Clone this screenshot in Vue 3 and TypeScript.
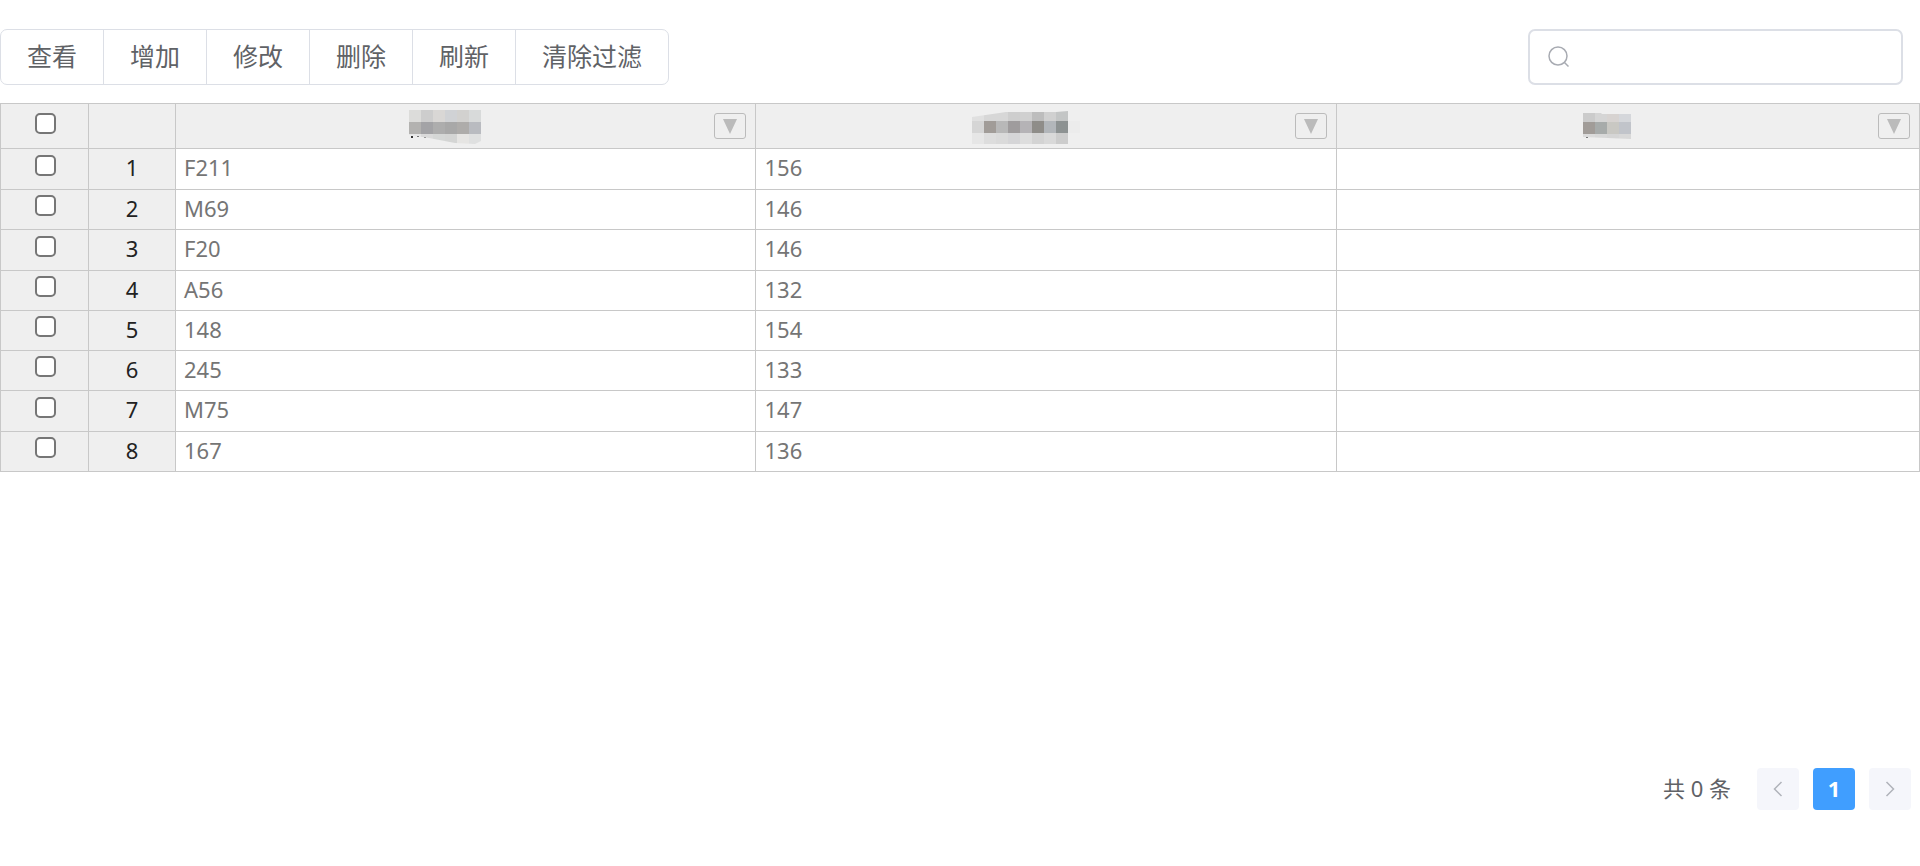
<script setup lang="ts">
import { ref, computed } from 'vue'

interface Block { x: number; y: number; w: number; h: number; fill: string }
interface Column { key: 'code' | 'size' | 'note'; width: number; height: number; outline: string; blocks: Block[] }
interface Row { id: number; code: string; size: string; note: string }

const actions = ['查看', '增加', '修改', '删除', '刷新', '清除过滤']

function strip(y: number, h: number, colors: string[]): Block[] {
  return colors.map((fill, i) => ({ x: i * 12, y, w: 12, h, fill }))
}

const columns: Column[] = [
  {
    key: 'code', width: 72, height: 34, outline: '0,0 72,0 72,31 66,34 46,33 20,28 0,25',
    blocks: [
      ...strip(0, 12, ['#dcdcda', '#cdcdcd', '#d9d7d5', '#d0d2d5', '#d2d1cf', '#d8dada']),
      ...strip(12, 12, ['#b3b2b0', '#a3a3a6', '#adadad', '#a8a8a8', '#aeacaa', '#b9bbc0']),
      ...strip(24, 10, ['#e5e5e5', '#dadada', '#d5d7d6', '#d4d5d4', '#e6e5e3', '#dfe0e0']),
    ],
  },
  {
    key: 'size', width: 108, height: 33, outline: '0,6 34,1 84,1 96,0 96,10 108,10 108,22 96,22 96,33 0,33',
    blocks: [
      ...strip(0, 10, ['#e0e0e0', '#d7d7d7', '#d7d7d7', '#cecece', '#d0d0d0', '#bdbdbd', '#d0d0d0', '#c3c5c5']),
      ...strip(10, 12, ['#d5d5d5', '#a19c98', '#b8b8b8', '#9f9c9d', '#b5b3b6', '#8f8d89', '#b2b6ba', '#8d9292', '#ececec']),
      ...strip(22, 11, ['#e6e6e6', '#dddddd', '#dadada', '#d5d5d7', '#dddddd', '#d3d3d3', '#d9d9d9', '#cccccc']),
    ],
  },
  {
    key: 'note', width: 48, height: 28, outline: '0,0 18,0 19,1 48,1 48,26 0,24',
    blocks: [
      ...strip(0, 9, ['#cbcbcb', '#d5d5d5', '#d7d3d1', '#d5d7db']),
      ...strip(9, 12, ['#a19c98', '#a7abaa', '#c9c8c3', '#c1c4ca']),
      ...strip(21, 5, ['#dbdbdb', '#d8d8d8', '#d5d5d5', '#d8d8d8']),
    ],
  },
]

const rows: Row[] = [
  ['F211', '156'], ['M69', '146'], ['F20', '146'], ['A56', '132'],
  ['148', '154'], ['245', '133'], ['M75', '147'], ['167', '136'],
].map(([code, size], i) => ({ id: i + 1, code, size, note: '' }))

const keyword = ref('')
const total = ref(0)
const selected = ref<number[]>([])
const allSelected = computed<boolean>({
  get: () => selected.value.length === rows.length,
  set: (on) => { selected.value = on ? rows.map((r) => r.id) : [] },
})
</script>

<template>
  <main class="page">
    <header class="toolbar">
      <div class="actions">
        <button v-for="a in actions" :key="a" type="button" class="action">{{ a }}</button>
      </div>
      <label class="search">
        <svg class="search-icon" viewBox="0 0 21 21" aria-hidden="true">
          <circle cx="10" cy="10" r="9" />
          <path d="M16.5 16.5 20.5 20.5" />
        </svg>
        <input v-model="keyword" type="text" class="search-input" aria-label="搜索" />
      </label>
    </header>

    <section class="grid">
      <table class="sheet">
        <colgroup>
          <col class="col-check" />
          <col class="col-index" />
          <col v-for="c in columns" :key="c.key" :class="'col-' + c.key" />
        </colgroup>
        <thead>
          <tr>
            <th class="check"><input v-model="allSelected" type="checkbox" class="box" aria-label="全选" /></th>
            <th></th>
            <th v-for="c in columns" :key="c.key">
              <div class="head">
                <span class="head-label">
                  <svg :width="c.width" :height="c.height" :viewBox="`0 0 ${c.width} ${c.height}`" shape-rendering="crispEdges" aria-hidden="true">
                    <clipPath :id="'mask-' + c.key"><polygon :points="c.outline" /></clipPath>
                    <g :clip-path="`url(#mask-${c.key})`">
                      <rect v-for="(b, i) in c.blocks" :key="i" :x="b.x" :y="b.y" :width="b.w" :height="b.h" :fill="b.fill" />
                    </g>
                    <g v-if="c.key === 'code'" fill="#333">
                      <rect x="2" y="26" width="2" height="2" />
                      <rect x="8" y="26" width="2" height="1" fill="#777" />
                      <rect x="15" y="27" width="2" height="1" fill="#999" />
                    </g>
                    <rect v-if="c.key === 'note'" x="3" y="24" width="2" height="1" fill="#777" />
                  </svg>
                </span>
                <button type="button" class="filter" aria-label="过滤">
                  <svg width="14" height="15" viewBox="0 0 14 15" aria-hidden="true"><path d="M0 0h14L7 15z" fill="#bbb" /></svg>
                </button>
              </div>
            </th>
          </tr>
        </thead>
        <tbody>
          <tr v-for="r in rows" :key="r.id">
            <th class="check"><input v-model="selected" type="checkbox" class="box" :value="r.id" :aria-label="'选择 ' + r.id" /></th>
            <th class="index">{{ r.id }}</th>
            <td v-for="c in columns" :key="c.key">{{ r[c.key] }}</td>
          </tr>
        </tbody>
      </table>
    </section>

    <nav class="pager" aria-label="分页">
      <span class="total">共 {{ total }} 条</span>
      <button type="button" class="page-btn" disabled aria-label="上一页">
        <svg width="10" height="16" viewBox="0 0 10 16"><path d="M8.5 1 1.5 8l7 7" /></svg>
      </button>
      <button type="button" class="page-btn current">1</button>
      <button type="button" class="page-btn" disabled aria-label="下一页">
        <svg width="10" height="16" viewBox="0 0 10 16"><path d="M1.5 1l7 7-7 7" /></svg>
      </button>
    </nav>
  </main>
</template>

<style>
body {
  margin: 0;
  background: #fff;
}
</style>

<style scoped>
.page {
  padding-top: 29px;
  font-family: "Noto Sans", "Noto Sans CJK SC", sans-serif;
  font-size: 22px;
  color: #606266;
}
button,
input {
  font-family: inherit;
  margin: 0;
}
.toolbar {
  display: flex;
  justify-content: space-between;
  padding-right: 17px;
  margin-bottom: 18px;
}
.actions {
  display: flex;
  border: 1px solid #dcdfe6;
  border-radius: 7px;
}
.action {
  height: 54px;
  padding: 0 26px 2px;
  border: 0;
  border-left: 1px solid #dcdfe6;
  background: none;
  color: #606266;
  font-size: 25px;
  line-height: 50px;
}
.action:first-child {
  border-left: 0;
}
.search {
  display: flex;
  align-items: center;
  box-sizing: border-box;
  width: 375px;
  height: 56px;
  padding: 0 18px 1px;
  border: 2px solid #dcdfe6;
  border-radius: 7px;
}
.search-icon {
  flex: none;
  width: 21px;
  height: 21px;
  fill: none;
  stroke: #a8abb2;
  stroke-width: 1.5;
}
.search-input {
  flex: 1;
  min-width: 0;
  height: 48px;
  padding: 0 10px;
  border: 0;
  outline: 0;
  background: none;
  color: #606266;
  font-size: 22px;
}
.grid {
  min-height: 665px;
}
.sheet {
  width: 100%;
  table-layout: fixed;
  border-spacing: 0;
  border-top: 1px solid #c8c8c8;
  border-left: 1px solid #c8c8c8;
}
.col-check {
  width: 88px;
}
.col-index {
  width: 87px;
}
.col-code,
.col-size {
  width: 30.25%;
}
th,
td {
  box-sizing: border-box;
  padding: 0;
  border-right: 1px solid #c8c8c8;
  border-bottom: 1px solid #c8c8c8;
  line-height: 30px;
}
th {
  background: #efefef;
  color: #222;
  font-weight: 400;
}
thead th {
  height: 45px;
}
tbody th,
tbody td {
  height: 40px;
  padding-bottom: 4px;
}
tbody tr:nth-child(4n + 3) th,
tbody tr:first-child th {
  height: 41px;
}
td {
  padding-left: 8px;
  color: #757575;
}
th.check {
  padding: 0 0 0 2px;
  vertical-align: top;
}
.box {
  display: block;
  box-sizing: border-box;
  appearance: none;
  width: 21px;
  height: 21px;
  margin: 5px auto 0;
  border: 2px solid #767676;
  border-radius: 5px;
  background: #fff;
}
tbody tr:nth-child(4n + 3) .box,
tbody tr:first-child .box {
  margin-top: 6px;
}
.box:checked {
  border-color: #409eff;
  background: #409eff;
}
thead .box {
  margin-top: 9px;
}
.head {
  display: flex;
  align-items: center;
  padding-right: 9px;
}
.head-label {
  display: flex;
  flex: 1;
  justify-content: center;
  padding-top: 2px;
}
.filter {
  display: flex;
  align-items: center;
  justify-content: center;
  box-sizing: border-box;
  width: 32px;
  height: 26px;
  padding: 0;
  border: 1px solid #bbb;
  border-radius: 3px;
  background: none;
}
.pager {
  display: flex;
  align-items: flex-start;
  justify-content: flex-end;
  gap: 14px;
  padding-right: 9px;
}
.total {
  margin-right: 12px;
  line-height: 40px;
}
.page-btn {
  display: flex;
  align-items: center;
  justify-content: center;
  box-sizing: border-box;
  width: 42px;
  height: 42px;
  padding: 0;
  border: 0;
  border-radius: 4px;
  background: #f5f6fb;
  font-size: 22px;
}
.page-btn svg {
  fill: none;
  stroke: #b0b3ba;
  stroke-width: 1.5;
}
.page-btn.current {
  padding-bottom: 3px;
  background: #409eff;
  color: #fff;
  font-weight: 700;
}
</style>
